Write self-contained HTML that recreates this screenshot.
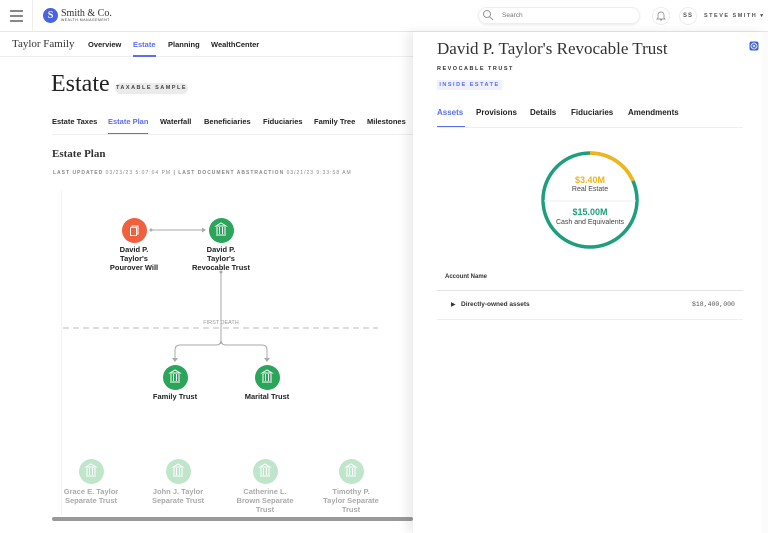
<!DOCTYPE html>
<html><head><meta charset="utf-8"><style>
*{margin:0;padding:0;box-sizing:border-box}
body{width:768px;height:533px;overflow:hidden;background:#fff;font-family:"Liberation Sans",sans-serif;color:#222;position:relative}
.a{position:absolute}
.serif{font-family:"Liberation Serif",serif}
.b{font-weight:bold}
.cap{text-transform:uppercase;letter-spacing:1.5px;font-weight:bold}
.nd{position:absolute;width:25px;height:25px;border-radius:50%}
.lbl{position:absolute;width:100px;text-align:center;font-size:7.5px;font-weight:bold;line-height:9px;color:#222}
.fl{color:#aaa}
</style></head><body>
<div class="a" style="left:0;top:0;width:768px;height:32px;border-bottom:1px solid #e6e6e6;background:#fff"></div>
<div class="a" style="left:32px;top:0;width:1px;height:32px;background:#eee"></div>
<div class="a" style="left:10px;top:10px;width:13px;height:1.5px;background:#888;box-shadow:0 5px 0 #888,0 10px 0 #888"></div>
<div class="a" style="left:43px;top:8px;width:15px;height:15px;border-radius:50%;background:#4a63e0;color:#fff;font:bold 10px 'Liberation Serif',serif;text-align:center;line-height:15px">S</div>
<div class="a serif" style="left:61px;top:8px;font-size:10px;color:#333">Smith &amp; Co.</div>
<div class="a" style="left:61px;top:18px;font-size:3.5px;color:#444;letter-spacing:.5px">WEALTH MANAGEMENT</div>
<div class="a" style="left:478px;top:7px;width:162px;height:17px;border-radius:9px;border:1px solid #eee;box-shadow:0 1px 2px rgba(0,0,0,.08)"></div>
<svg class="a" style="left:482px;top:9px" width="12" height="12"><circle cx="5" cy="5" r="3.5" fill="none" stroke="#999" stroke-width="1"/><line x1="7.5" y1="7.5" x2="11" y2="11" stroke="#999"/></svg>
<div class="a" style="left:502px;top:12px;font-size:6.5px;color:#777">Search</div>
<div class="a" style="left:652px;top:7px;width:18px;height:18px;border-radius:50%;border:1px solid #eee"></div>
<svg class="a" style="left:655px;top:10px" width="12" height="12"><path d="M3 8V5a3 3 0 0 1 6 0v3l1 1H2z M5 10h2" fill="none" stroke="#999" stroke-width=".9"/></svg>
<div class="a" style="left:679px;top:7px;width:18px;height:18px;border-radius:50%;border:1px solid #eee;font-size:6px;font-weight:bold;color:#555;text-align:center;line-height:17px;letter-spacing:1px">SS</div>
<div class="a cap" style="left:704px;top:13px;font-size:5.5px;color:#555">STEVE SMITH ▾</div>
<div class="a" style="left:0;top:32px;width:413px;height:25px;border-bottom:1px solid #eee"></div>
<div class="a serif" style="left:12px;top:38px;font-size:11px;color:#333">Taylor Family</div>
<div class="a b" style="left:88px;top:40px;font-size:7.5px">Overview</div>
<div class="a b" style="left:133px;top:40px;font-size:7.5px;color:#5a6ef0">Estate</div>
<div class="a" style="left:133px;top:55px;width:23px;height:2px;background:#5a6ef0"></div>
<div class="a b" style="left:168px;top:40px;font-size:7.5px">Planning</div>
<div class="a b" style="left:211px;top:40px;font-size:7.5px">WealthCenter</div>
<div class="a serif" style="left:51px;top:71px;font-size:24px;color:#222">Estate</div>
<div class="a cap" style="left:115px;top:83px;width:73px;height:11px;border-radius:6px;background:#ebebeb;font-size:5.5px;text-align:center;line-height:11px;color:#444">TAXABLE SAMPLE</div>
<div class="a b" style="left:52px;top:117px;font-size:7.5px">Estate Taxes</div>
<div class="a b" style="left:108px;top:117px;font-size:7.5px;color:#5a6ef0">Estate Plan</div>
<div class="a" style="left:108px;top:133px;width:40px;height:2px;background:#5a6ef0"></div>
<div class="a b" style="left:160px;top:117px;font-size:7.5px">Waterfall</div>
<div class="a b" style="left:204px;top:117px;font-size:7.5px">Beneficiaries</div>
<div class="a b" style="left:263px;top:117px;font-size:7.5px">Fiduciaries</div>
<div class="a b" style="left:314px;top:117px;font-size:7.5px">Family Tree</div>
<div class="a b" style="left:367px;top:117px;font-size:7.5px">Milestones</div>
<div class="a" style="left:52px;top:134px;width:361px;height:1px;background:#eee"></div>
<div class="a serif b" style="left:52px;top:148px;font-size:11px;color:#333">Estate Plan</div>
<div class="a" style="left:53px;top:170px;font-size:5px;letter-spacing:1px;color:#888;font-weight:bold">LAST UPDATED <span style="font-weight:normal">03/23/23 5:07:04 PM</span> | LAST DOCUMENT ABSTRACTION <span style="font-weight:normal">03/21/23 9:33:58 AM</span></div>
<div class="a" style="left:61px;top:190px;width:1px;height:325px;background:#f2f2f2"></div>
<svg class="a" style="left:0;top:0" width="413" height="533">
<line x1="151" y1="230" x2="202" y2="230" stroke="#aaa" stroke-width="1"/>
<circle cx="151" cy="230" r="1.5" fill="#aaa"/><path d="M202 227.5l4 2.5-4 2.5z" fill="#aaa"/>
<line x1="221" y1="272" x2="221" y2="344" stroke="#aaa"/><circle cx="221" cy="272" r="1.5" fill="#aaa"/>
<path d="M221 340q0 5-5 5H180q-5 0-5 5v10M221 340q0 5 5 5h36q5 0 5 5v10" fill="none" stroke="#aaa"/>
<path d="M172 358l3 4 3-4zM264 358l3 4 3-4z" fill="#aaa"/>
<line x1="63" y1="328" x2="378" y2="328" stroke="#bbb" stroke-dasharray="6 4"/>
<text x="221" y="324" font-size="5.5" fill="#999" text-anchor="middle" font-family="Liberation Sans">FIRST DEATH</text>
<rect x="52" y="517" width="361" height="4" rx="2" fill="#999"/>
</svg>
<div class="nd" style="left:122px;top:218px;background:#f0603f"></div>
<svg class="a" style="left:128px;top:224px" width="13" height="13"><rect x="4" y="2" width="6" height="8" fill="none" stroke="#fff" stroke-width="1"/><rect x="2.5" y="3.5" width="6" height="8" fill="#f0603f" stroke="#fff" stroke-width="1"/></svg>
<div class="lbl" style="left:84px;top:245px">David P.<br>Taylor's<br>Pourover Will</div>
<div class="nd" style="left:209px;top:218px;background:#2aa55a"></div>
<div class="lbl" style="left:171px;top:245px">David P.<br>Taylor's<br>Revocable Trust</div>
<div class="nd" style="left:163px;top:365px;background:#2aa55a"></div>
<div class="lbl" style="left:125px;top:392px">Family Trust</div>
<div class="nd" style="left:255px;top:365px;background:#2aa55a"></div>
<div class="lbl" style="left:217px;top:392px">Marital Trust</div>
<div class="nd" style="left:79px;top:459px;background:#bfe6cb"></div>
<div class="lbl fl" style="left:41px;top:487px">Grace E. Taylor<br>Separate Trust</div>
<div class="nd" style="left:166px;top:459px;background:#bfe6cb"></div>
<div class="lbl fl" style="left:128px;top:487px">John J. Taylor<br>Separate Trust</div>
<div class="nd" style="left:253px;top:459px;background:#bfe6cb"></div>
<div class="lbl fl" style="left:215px;top:487px">Catherine L.<br>Brown Separate<br>Trust</div>
<div class="nd" style="left:339px;top:459px;background:#bfe6cb"></div>
<div class="lbl fl" style="left:301px;top:487px">Timothy P.<br>Taylor Separate<br>Trust</div>
<svg class="a" style="left:0;top:0" width="413" height="533" fill="none" stroke="#fff" stroke-width="1">
<g id="bk"><path d="M216 226l5-3 5 3zM216 235h10M217 227v7M219.5 227v7M222.5 227v7M225 227v7"/></g>
<use href="#bk" x="-46" y="147"/><use href="#bk" x="46" y="147"/>
<use href="#bk" x="-130" y="241"/><use href="#bk" x="-43" y="241"/><use href="#bk" x="44" y="241"/><use href="#bk" x="130" y="241"/>
</svg>
<div class="a" style="left:413px;top:32px;width:355px;height:501px;background:#fff;box-shadow:-6px 0 10px rgba(0,0,0,.08)"></div>
<div class="a" style="left:762px;top:32px;width:6px;height:501px;background:#fbfbfb"></div>
<div class="a serif" style="left:437px;top:39px;font-size:17px;color:#333">David P. Taylor's Revocable Trust</div>
<svg class="a" style="left:749px;top:41px" width="10" height="10"><rect x="0.5" y="0.5" width="9" height="9" rx="2" fill="#3a5ed8"/><circle cx="5" cy="5" r="3" fill="none" stroke="#fff" stroke-width=".8"/><path d="M3.6 3.6l2.8 2.8M6.4 3.6l-2.8 2.8" stroke="#fff" stroke-width=".8"/></svg>
<div class="a cap" style="left:437px;top:66px;font-size:5.5px;color:#333">REVOCABLE TRUST</div>
<div class="a cap" style="left:437px;top:80px;width:65px;height:10px;background:#eef0fd;font-size:5.5px;color:#5a6ef0;text-align:center;line-height:10px">INSIDE ESTATE</div>
<div class="a b" style="left:437px;top:108px;font-size:8px;color:#5a6ef0">Assets</div>
<div class="a" style="left:437px;top:126px;width:28px;height:2px;background:#5a6ef0"></div>
<div class="a b" style="left:476px;top:108px;font-size:8px">Provisions</div>
<div class="a b" style="left:530px;top:108px;font-size:8px">Details</div>
<div class="a b" style="left:571px;top:108px;font-size:8px">Fiduciaries</div>
<div class="a b" style="left:628px;top:108px;font-size:8px">Amendments</div>
<div class="a" style="left:437px;top:127px;width:306px;height:1px;background:#eee"></div>
<svg class="a" style="left:540px;top:150px" width="100" height="100"><circle cx="50" cy="50" r="47" fill="none" stroke="#1e9e7e" stroke-width="3.5"/>
<path d="M50 3A47 47 0 0 1 93 31" fill="none" stroke="#f2b418" stroke-width="3.5"/>
<line x1="4" y1="51" x2="96" y2="51" stroke="#eee" stroke-width="1"/></svg>
<div class="a b" style="left:540px;top:175px;width:100px;text-align:center;font-size:9px;color:#f2b418">$3.40M</div>
<div class="a" style="left:540px;top:186px;width:100px;text-align:center;font-size:7px;color:#444">Real Estate</div>
<div class="a b" style="left:540px;top:207px;width:100px;text-align:center;font-size:9px;color:#1e9e7e">$15.00M</div>
<div class="a" style="left:540px;top:219px;width:100px;text-align:center;font-size:7px;color:#444">Cash and Equivalents</div>
<div class="a b" style="left:445px;top:274px;font-size:6px;color:#333">Account Name</div>
<div class="a" style="left:437px;top:290px;width:306px;height:1px;background:#e4e4e4"></div>
<div class="a" style="left:451px;top:301px;font-size:6px;color:#333">▶</div>
<div class="a b" style="left:461px;top:301px;font-size:6.5px;color:#333">Directly-owned assets</div>
<div class="a" style="left:692px;top:301px;font-size:6.5px;color:#555;font-family:'Liberation Mono',monospace">$18,400,000</div>
<div class="a" style="left:437px;top:319px;width:306px;height:1px;background:#eee"></div>
</body></html>
